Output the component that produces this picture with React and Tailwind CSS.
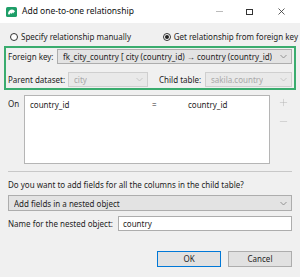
import { Minus, Plus } from 'lucide-react';

// ── Small pieces ────────────────────────────────────────────────────────────

const Chevron = ({ light }) => (
  <svg width="7" height="5" viewBox="0 0 7 5" className="shrink-0 ml-[3px]">
    <path d="M0.5 1 L3.5 4 L6.5 1" fill="none" stroke={light ? '#c4c4c4' : '#8a8a8a'} strokeWidth="0.9" />
  </svg>
);

const Combo = ({ text, disabled, className = '' }) => (
  <div
    className={`flex items-center justify-between h-[15px] border pl-[5px] pr-[4px] ${
      disabled ? 'bg-[#e9e9e9] border-[#cfcfcf] text-[#a8a8a8]' : 'bg-[#e3e3e3] border-[#adadad] text-[#1e1e1e]'
    } ${className}`}
  >
    <span className="whitespace-nowrap overflow-hidden leading-[13px]">{text}</span>
    <Chevron light={disabled} />
  </div>
);

const Radio = ({ checked, label }) => (
  <div className="flex items-center gap-[3px]">
    <span className="w-[8px] h-[8px] rounded-full border border-[#333] bg-white flex items-center justify-center">
      {checked && <span className="w-[4px] h-[4px] rounded-full bg-[#222]" />}
    </span>
    <span className="whitespace-nowrap">{label}</span>
  </div>
);

const AppIcon = () => (
  <svg width="11" height="10" viewBox="0 0 11 10">
    <rect x="0" y="0" width="11" height="10" rx="1.6" fill="#1e9e68" />
    <path d="M2 7.2 C2 4.2 4 2.6 6 2.6 C7.6 2.6 8.8 3.6 9 5.2 L8 4.8 L7.6 6.4 L6.6 5.6 L5.8 7 L4.8 5.8 L3.6 7.4 Z" fill="#fff" />
  </svg>
);

// ── Dialog ──────────────────────────────────────────────────────────────────

export default function App() {
  return (
    <div
      className="w-[300px] h-[277px] bg-[#f0f0f0] overflow-hidden text-[8px] leading-none text-[#1e1e1e]"
      style={{ fontFamily: '"Noto Sans", "Open Sans", sans-serif' }}
    >
      {/* ── Title bar ── */}
      <div className="h-[23px] bg-white flex items-center">
        <div className="ml-[6px]"><AppIcon /></div>
        <span className="ml-[5px] text-[8.5px] text-[#111]">Add one-to-one relationship</span>
        <div className="ml-auto flex items-center">
          <span className="w-[7px] h-px bg-[#bbb] mr-[23px]" />
          <span className="w-[7px] h-[6px] border border-[#333] mr-[25px]" />
          <svg width="7" height="7" viewBox="0 0 7 7" className="mr-[15px]">
            <path d="M0.5 0.5 L6.5 6.5 M6.5 0.5 L0.5 6.5" stroke="#333" strokeWidth="0.8" />
          </svg>
        </div>
      </div>

      {/* ── Mode radios ── */}
      <div className="flex items-center h-[12px] mt-[8px] pl-[10px] pr-[2px]">
        <Radio label="Specify relationship manually" />
        <div className="ml-auto">
          <Radio checked label="Get relationship from foreign key" />
        </div>
      </div>

      {/* ── Foreign key box ── */}
      <div className="mt-[3px] ml-[4px] w-[292px] h-[44px] border-2 border-[#3aac6e] pl-[2px] pr-[2px] pt-px">
        <div className="flex items-center">
          <span className="w-[49px] shrink-0">Foreign key:</span>
          <Combo className="flex-1 min-w-0" text="fk_city_country [ city (country_id) → country (country_id)" />
        </div>
        <div className="flex items-center mt-[8px]">
          <span className="w-[60px] shrink-0">Parent dataset:</span>
          <Combo disabled className="w-[80px]" text="city" />
          <span className="ml-[11px] w-[46px] shrink-0">Child table:</span>
          <Combo disabled className="flex-1 min-w-0" text="sakila.country" />
        </div>
      </div>

      {/* ── Join fields ── */}
      <div className="flex mt-[5px] pl-[8px]">
        <span className="w-[16px] pt-[5px]">On</span>
        <div className="w-[246px] h-[69px] bg-white border border-[#b5b5b5] pt-[3px]">
          <div className="flex items-center h-[12px] leading-[12px]">
            <span className="ml-[5px] w-[122px]">country_id</span>
            <span className="w-[36px]">=</span>
            <span>country_id</span>
          </div>
        </div>
        <div className="flex flex-col items-center ml-[8px] mt-[2px] gap-[8px] text-[#b0b0b0]">
          <Plus size={11} strokeWidth={1} />
          <Minus size={11} strokeWidth={1} />
        </div>
      </div>

      <div className="mt-[7px] ml-[8px] w-[284px] h-px bg-[#c8c8c8]" />

      {/* ── Nested fields ── */}
      <div className="mt-[8px] pl-[8px] h-[9px] flex items-center">
        Do you want to add fields for all the columns in the child table?
      </div>
      <div className="mt-[6px] ml-[8px] w-[284px]">
        <Combo className="h-[16px]" text="Add fields in a nested object" />
      </div>

      <div className="flex items-center mt-[5px] pl-[8px]">
        <span className="w-[110px]">Name for the nested object:</span>
        <div className="w-[174px] h-[15px] bg-white border border-[#adadad] flex items-center pl-[4px]">
          country
        </div>
      </div>

      {/* ── Buttons ── */}
      <div className="flex justify-end gap-[7px] mt-[20px] pr-[8px]">
        <button className="w-[64px] h-[16px] bg-[#e1e1e1] border border-[#0078d7] text-[8px]">OK</button>
        <button className="w-[64px] h-[16px] bg-[#e1e1e1] border border-[#adadad] text-[8px]">Cancel</button>
      </div>
    </div>
  );
}
